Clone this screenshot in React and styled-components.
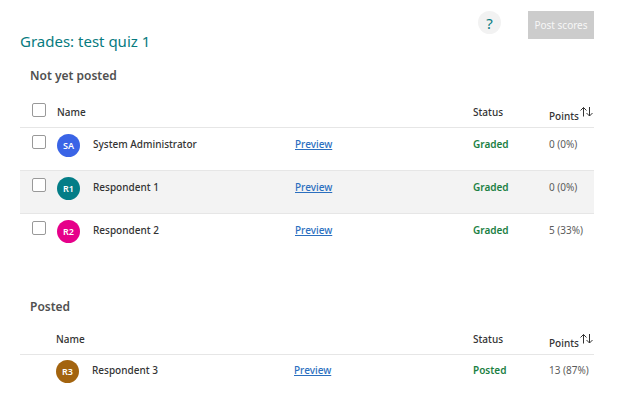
import React from 'react';
import styled, { createGlobalStyle } from 'styled-components';

const palette = {
  teal: '#077b80',
  green: '#1b8043',
  blue: '#2b6fbf',
  text: '#333',
  line: '#e6e6e6',
};

const pending = [
  { initials: 'SA', name: 'System Administrator', color: '#3a64e6', points: '0 (0%)' },
  { initials: 'R1', name: 'Respondent 1', color: '#037d87', points: '0 (0%)' },
  { initials: 'R2', name: 'Respondent 2', color: '#e6008a', points: '5 (33%)' },
];

const posted = [
  { initials: 'R3', name: 'Respondent 3', color: '#a3640f', points: '13 (87%)' },
];

const SortIcon = () => (
  <SortSvg width='14' height='12' viewBox='0 0 14 12' aria-hidden='true'>
    <path d='M4.5 10.5V1.5M1.5 4.5l3-3 3 3M10.5 1v9M7.5 7l3 3 3-3' />
  </SortSvg>
);

const GradesTable = ({ rows, status, selectable }) => (
  <Table>
    <colgroup>
      <col style={{ width: selectable ? 37 : 36 }} />
      <col style={{ width: 36 }} />
      <col />
      <col style={{ width: selectable ? 178 : 179 }} />
      <col style={{ width: 76 }} />
      <col style={{ width: 45 }} />
    </colgroup>
    <thead>
      <tr>
        <HeadCell>
          {selectable && <Checkbox type='checkbox' aria-label='Select all' />}
        </HeadCell>
        <HeadCell colSpan={2}>Name</HeadCell>
        <HeadCell />
        <HeadCell>Status</HeadCell>
        <HeadCell>
          <SortButton type='button'>
            Points
            <SortIcon />
          </SortButton>
        </HeadCell>
      </tr>
    </thead>
    <tbody>
      {rows.map((row) => (
        <Row key={row.initials}>
          <Cell $top={7}>
            {selectable && (
              <Checkbox type='checkbox' aria-label={`Select ${row.name}`} />
            )}
          </Cell>
          <Cell $top={selectable ? 6 : 5}>
            <Avatar $color={row.color}>{row.initials}</Avatar>
          </Cell>
          <NameCell $top={selectable ? 8 : 7}>{row.name}</NameCell>
          <Cell $top={selectable ? 8 : 7}>
            <PreviewLink href='#preview'>Preview</PreviewLink>
          </Cell>
          <StatusCell $top={selectable ? 8 : 7}>{status}</StatusCell>
          <PointsCell $top={selectable ? 8 : 7}>{row.points}</PointsCell>
        </Row>
      ))}
    </tbody>
  </Table>
);

const App = () => {
  return (
    <>
      <GlobalStyle />
      <Page>
        <Header>
          <Title>Grades: test quiz 1</Title>
          <Actions>
            <HelpButton type='button' aria-label='Help'>?</HelpButton>
            <PostButton type='button' disabled>Post scores</PostButton>
          </Actions>
        </Header>
        <Section>
          <SectionTitle $gap='10px'>Not yet posted</SectionTitle>
          <GradesTable rows={pending} status='Graded' selectable />
        </Section>
        <Section>
          <SectionTitle $gap='6px'>Posted</SectionTitle>
          <GradesTable rows={posted} status='Posted' />
        </Section>
      </Page>
    </>
  );
};

const GlobalStyle = createGlobalStyle`
  * {
    box-sizing: border-box;
  }

  body {
    margin: 0;
    background: #fff;
    color: ${palette.text};
    font-family: 'Noto Sans', 'Open Sans', sans-serif;
    font-size: 10px;
    line-height: 16px;
  }

  button {
    border: 0;
    padding: 0;
    font: inherit;
  }
`;

const Page = styled.main`
  padding: 11px 30px 20px 20px;
`;

const Header = styled.header`
  display: flex;
  justify-content: space-between;
  height: 41px;
`;

const Title = styled.h1`
  align-self: flex-end;
  margin: 0;
  color: ${palette.teal};
  font-size: 15px;
  font-weight: 400;
  line-height: 22px;
`;

const Actions = styled.div`
  display: flex;
  align-items: flex-start;
  gap: 27px;
`;

const HelpButton = styled.button`
  width: 23px;
  height: 23px;
  border-radius: 50%;
  background: #f2f2f2;
  color: ${palette.teal};
  font-size: 15px;
`;

const PostButton = styled.button`
  width: 66px;
  height: 28px;
  background: #ccc;
  color: #f7f7f7;
  white-space: nowrap;
`;

const Section = styled.section`
  padding-top: 14px;

  & + & {
    padding-top: 40px;
  }
`;

const SectionTitle = styled.h2`
  margin: 0 0 ${({ $gap }) => $gap} 10px;
  color: #505050;
  font-size: 12px;
  font-weight: 600;
  line-height: 20px;
`;

const Table = styled.table`
  width: 100%;
  table-layout: fixed;
  border-spacing: 0;
`;

const HeadCell = styled.th`
  height: 32px;
  padding: 0;
  border-bottom: 1px solid ${palette.line};
  font-weight: 500;
  text-align: left;
  vertical-align: middle;
  white-space: nowrap;
`;

const Cell = styled.td`
  height: 43px;
  padding: ${({ $top }) => $top}px 0 0;
  vertical-align: top;
  white-space: nowrap;
`;

const NameCell = styled(Cell)`
  font-weight: 500;
`;

const StatusCell = styled(Cell)`
  color: ${palette.green};
  font-weight: 600;
`;

const PointsCell = styled(Cell)`
  color: #5c5c5c;
`;

const Row = styled.tr`
  &:nth-child(even) {
    background: #f3f3f3;
  }

  &:not(:last-child) td {
    border-bottom: 1px solid ${palette.line};
  }
`;

const Checkbox = styled.input`
  appearance: none;
  display: block;
  width: 14px;
  height: 14px;
  margin: 0 0 4px 12px;
  border: 1px solid #999;
  border-radius: 2px;
  background: #fff;

  &:checked {
    background: ${palette.teal};
  }
`;

const Avatar = styled.span`
  display: flex;
  align-items: center;
  justify-content: center;
  width: 23px;
  height: 23px;
  border-radius: 50%;
  background: ${({ $color }) => $color};
  color: #fff;
  font-size: 9px;
  font-weight: 600;
`;

const PreviewLink = styled.a`
  color: ${palette.blue};
  font-weight: 500;
`;

const SortButton = styled.button`
  display: flex;
  align-items: flex-end;
  padding-top: 6px;
  background: none;
  color: inherit;
`;

const SortSvg = styled.svg`
  flex: none;
  margin-bottom: 6px;
  fill: none;
  stroke: ${palette.text};
  stroke-width: 1;
`;

export default App;
